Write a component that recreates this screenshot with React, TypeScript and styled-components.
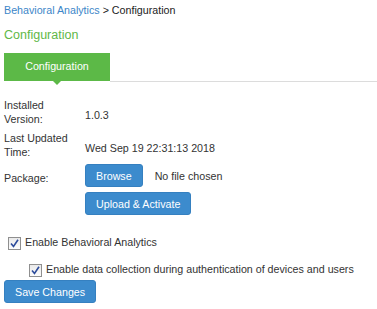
import React from 'react'
import styled, { createGlobalStyle } from 'styled-components'

const GlobalStyle = createGlobalStyle`
  body {
    margin: 0;
    background: #fff;
    font-family: "Liberation Sans", Arial, sans-serif;
    font-size: 10.7px;
    color: #333;
  }
`

const Page = styled.div`
  padding: 3px 0 0 4px;
`

const Breadcrumb = styled.div`
  line-height: 14px;
  color: #222;
`

const Crumb = styled.a`
  color: #3c86c8;
  text-decoration: none;
`

const Title = styled.h1`
  margin: 10px 0 0;
  font-size: 12.5px;
  font-weight: normal;
  line-height: 16px;
  color: #5fb847;
`

const TabBar = styled.div`
  display: flex;
  margin: 10px 0 0 0;
`

const Tab = styled.div`
  position: relative;
  width: 106px;
  height: 28px;
  background: #5cb947;
  color: #fff;
  display: flex;
  align-items: center;
  justify-content: center;
  padding-bottom: 2px;
  box-sizing: border-box;

  &::after {
    content: "";
    position: absolute;
    left: 50%;
    bottom: -4px;
    margin-left: -4px;
    border-left: 4px solid transparent;
    border-right: 4px solid transparent;
    border-top: 4px solid #5cb947;
  }
`

const TabLine = styled.div`
  flex: 1;
  align-self: flex-end;
  border-bottom: 1px solid #dcdcdc;
  margin-bottom: -1px;
`

const Form = styled.div`
  display: grid;
  grid-template-columns: 81px 1fr;
  row-gap: 5px;
  margin-top: 17px;
`

const Label = styled.div<{ $top?: boolean }>`
  line-height: 14px;
  width: 70px;
  align-self: ${p => (p.$top ? 'start' : 'center')};
  padding-top: ${p => (p.$top ? '7px' : '0')};
`

const Value = styled.div`
  align-self: center;
  margin-top: 5px;
  line-height: 14px;
`

const Uploads = styled.div`
  display: flex;
  flex-direction: column;
  align-items: flex-start;
  gap: 5px;
`

const FileRow = styled.div`
  display: flex;
  align-items: center;
  gap: 12px;
`

const Button = styled.button`
  font-family: inherit;
  font-size: 10.7px;
  height: 23px;
  padding: 0 10px;
  background: #3c8bcd;
  color: #fff;
  border: 1px solid #3580c0;
  border-radius: 3px;
  cursor: pointer;
`

const Checks = styled.div`
  margin-top: 22px;
  display: flex;
  flex-direction: column;
  gap: 14px;
  margin-bottom: 3px;
`

const CheckRow = styled.label<{ $indent: number }>`
  display: flex;
  align-items: center;
  gap: 4px;
  padding-left: ${p => p.$indent}px;
  height: 13px;
`

const Box = styled.span`
  width: 13px;
  height: 13px;
  box-sizing: border-box;
  border: 1px solid #8f8f8f;
  background: linear-gradient(#eaeaea, #fcfcfc);
  display: flex;
  align-items: center;
  justify-content: center;
  flex: none;
`

const CheckText = styled.span`
  margin-top: -3px;
`

function Check({ indent, children }: { indent: number; children: React.ReactNode }) {
  return (
    <CheckRow $indent={indent}>
      <Box>
        <svg width="9" height="9" viewBox="0 0 9 9">
          <path d="M1 4.5 L3.5 7.5 L8 0.8" fill="none" stroke="#2c4b9b" strokeWidth="1.6" />
        </svg>
      </Box>
      <CheckText>{children}</CheckText>
    </CheckRow>
  )
}

export default function App() {
  return (
    <>
      <GlobalStyle />
      <Page>
        <Breadcrumb>
          <Crumb href="#">Behavioral Analytics</Crumb> &gt; Configuration
        </Breadcrumb>
        <Title>Configuration</Title>
        <TabBar>
          <Tab>Configuration</Tab>
          <TabLine />
        </TabBar>

        <Form>
          <Label>Installed Version:</Label>
          <Value>1.0.3</Value>

          <Label>Last Updated Time:</Label>
          <Value>Wed Sep 19 22:31:13 2018</Value>

          <Label $top>Package:</Label>
          <Uploads>
            <FileRow>
              <Button>Browse</Button>
              <span>No file chosen</span>
            </FileRow>
            <Button>Upload &amp; Activate</Button>
          </Uploads>
        </Form>

        <Checks>
          <Check indent={4}>Enable Behavioral Analytics</Check>
          <Check indent={25}>Enable data collection during authentication of devices and users</Check>
        </Checks>
        <Button>Save Changes</Button>
      </Page>
    </>
  )
}
